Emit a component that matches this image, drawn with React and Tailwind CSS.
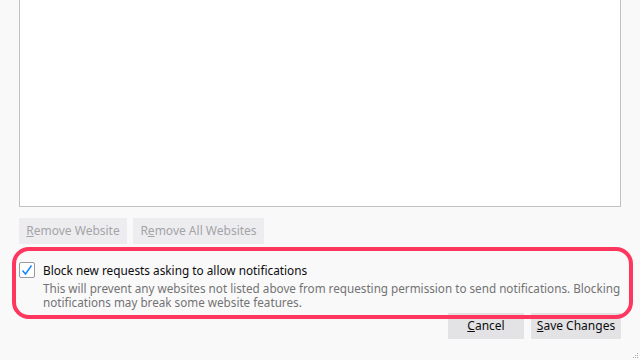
import React from "react";

export default function App() {
  const font = { fontFamily: '"Noto Sans", "Open Sans", sans-serif' };
  return (
    <div
      className="relative w-[640px] h-[360px] overflow-hidden bg-[#f9f9fa] px-[19px] text-[#0c0c0d]"
      style={font}
    >
      {/* site list */}
      <div className="h-[207px] bg-white border border-t-0 border-[#c2c2c4]" />

      {/* list buttons */}
      <div className="mt-[11px] flex gap-[6px]">
        <button className="h-[26px] w-[108px] bg-[#ededf0] text-[12px] text-[#a4a4a6]">
          <span className="underline">R</span>emove Website
        </button>
        <button className="h-[26px] w-[131px] bg-[#ededf0] text-[12px] text-[#a4a4a6]">
          R<span className="underline">e</span>move All Websites
        </button>
      </div>

      {/* block checkbox */}
      <div className="mt-[18px] flex items-start gap-[8px]">
        <div className="flex h-[16px] w-[16px] shrink-0 items-center justify-center rounded-[2px] border border-[#9a9a9c] bg-white">
          <svg width="12" height="12" viewBox="0 0 12 12" fill="none">
            <path d="M1.5 6.5 L4.5 10 L10.5 1.5" stroke="#0a84ff" strokeWidth="1.4" />
          </svg>
        </div>
        <div>
          <div className="text-[11.8px] leading-[16px] whitespace-nowrap">
            Block new requests asking to allow notifications
          </div>
          <div className="mt-[3px] text-[11.7px] leading-[14px] text-[#737373] whitespace-nowrap">
            <div>
              This will prevent any websites not listed above from requesting permission to send notifications. Blocking
            </div>
            <div>notifications may break some website features.</div>
          </div>
        </div>
      </div>

      {/* dialog buttons */}
      <div className="mt-[4px] flex justify-end gap-[7px]">
        <button className="h-[26px] w-[76px] bg-[#e3e3e5] text-[12px]">
          <span className="underline">C</span>ancel
        </button>
        <button className="h-[26px] w-[90px] bg-[#e3e3e5] text-[12px]">
          <span className="underline">S</span>ave Changes
        </button>
      </div>

      {/* highlight annotation */}
      <div className="absolute left-[12px] top-[247px] h-[72px] w-[621px] rounded-[17px] border-[4px] border-[#ff365e]" />

      {/* resize grip */}
      <svg className="absolute right-[1px] bottom-[1px]" width="8" height="8" viewBox="0 0 8 8">
        <rect x="6" y="2" width="1" height="1" fill="#aaa" />
        <rect x="4" y="4" width="1" height="1" fill="#aaa" />
        <rect x="6" y="4" width="1" height="1" fill="#aaa" />
        <rect x="2" y="6" width="1" height="1" fill="#aaa" />
        <rect x="4" y="6" width="1" height="1" fill="#aaa" />
        <rect x="6" y="6" width="1" height="1" fill="#aaa" />
      </svg>
    </div>
  );
}
